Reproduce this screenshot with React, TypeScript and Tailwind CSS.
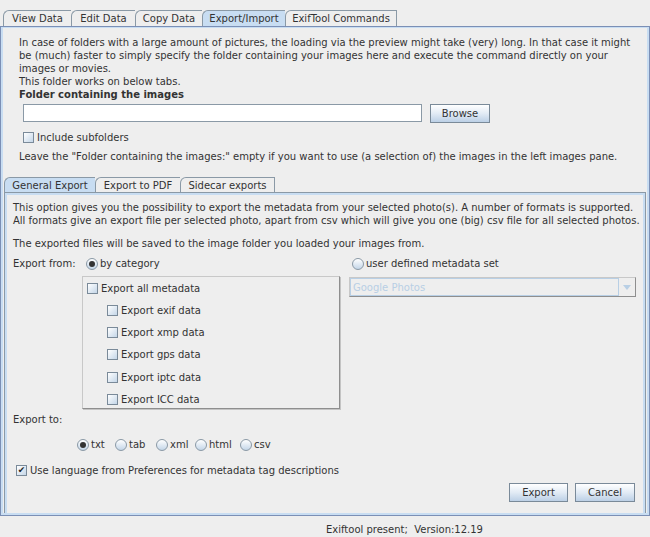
import React from "react";

const Tab: React.FC<{ label: string; w: number; selected?: boolean; last?: boolean }> = ({
  label,
  w,
  selected,
  last,
}) => (
  <div
    style={{ width: w }}
    className={
      "flex h-full items-center justify-center rounded-tl-[6px] border-t border-l border-[#8a99a6] " +
      (last ? "border-r " : "") +
      (selected ? "bg-[#c8ddf2]" : "bg-[#eeeeee]")
    }
  >
    {label}
  </div>
);

const Check: React.FC<{ checked?: boolean }> = ({ checked }) => (
  <span className="relative inline-flex h-[11px] w-[11px] shrink-0 items-center justify-center border border-[#7a8a99] bg-gradient-to-br from-white to-[#c4d6e8]">
    {checked && <span className="text-[9px] leading-none text-[#222]">✔</span>}
  </span>
);

const Radio: React.FC<{ checked?: boolean }> = ({ checked }) => (
  <span className="inline-flex h-[12px] w-[12px] shrink-0 items-center justify-center rounded-full border border-[#8a99a6] bg-gradient-to-b from-white to-[#c4d6e8]">
    {checked && <span className="h-[6px] w-[6px] rounded-full bg-[#333333]" />}
  </span>
);

const Button: React.FC<{ w: number; children: React.ReactNode }> = ({ w, children }) => (
  <div
    style={{ width: w }}
    className="flex h-[19px] items-center justify-center border border-[#7a8a99] bg-gradient-to-b from-white via-[#e2ebf5] to-[#bcd0e6]"
  >
    {children}
  </div>
);

export default function App() {
  const subs = ["Export exif data", "Export xmp data", "Export gps data", "Export iptc data", "Export ICC data"];
  const formats = [
    { label: "txt", w: 24, checked: true },
    { label: "tab", w: 27 },
    { label: "xml", w: 25 },
    { label: "html", w: 31 },
    { label: "csv", w: 24 },
  ];
  return (
    <div className="h-[537px] w-[650px] overflow-hidden whitespace-nowrap bg-[#eeeeee] text-[10px] leading-[13px] text-[#333333] [font-family:'DejaVu_Sans',sans-serif]">
      {/* outer tabs */}
      <div className="flex h-[16px] pl-[3px] mt-[10px]">
        <Tab label="View Data" w={68} />
        <Tab label="Edit Data" w={64} />
        <Tab label="Copy Data" w={67} />
        <Tab label="Export/Import" w={83} selected />
        <Tab label="ExifTool Commands" w={112} last />
      </div>

      {/* outer pane */}
      <div className="h-[490px] border border-[#7b8fb5]">
        <div className="flex h-full flex-col border-x-2 border-b-2 border-t border-[#c8ddf2]">
          <div className="px-[16px] pt-[8px]">
            <div>
              In case of folders with a large amount of pictures, the loading via the preview might take (very) long. In that case it might
            </div>
            <div>be (much) faster to simply specify the folder containing your images here and execute the command directly on your</div>
            <div>images or movies.</div>
            <div>This folder works on below tabs.</div>
            <div className="font-bold">Folder containing the images</div>
            <div className="mt-[3px] flex h-[18px]">
              <div className="ml-[4px] h-full w-[399px] border border-[#8a99a6] bg-white" />
              <div className="ml-[8px]">
                <Button w={60}>Browse</Button>
              </div>
            </div>
            <div className="mt-[9px] flex items-center gap-[3px] pl-[4px]">
              <Check />
              <span>Include subfolders</span>
            </div>
            <div className="mt-[6px]">
              Leave the "Folder containing the images:" empty if you want to use (a selection of) the images in the left images pane.
            </div>
          </div>

          {/* inner tabbed pane */}
          <div className="mt-[14px] ml-[1px] mr-[1px] flex flex-1 flex-col">
            <div className="flex h-[15px]">
              <Tab label="General Export" w={91} selected />
              <Tab label="Export to PDF" w={85} />
              <Tab label="Sidecar exports" w={95} last />
            </div>
            <div className="flex-1 border-x border-t border-[#8a99a6]">
              <div className="flex h-full flex-col border-x-2 border-t-2 border-[#c8ddf2] pl-[6px] pr-[6px] pt-[6px]">
                <div>
                  This option gives you the possibility to export the metadata from your selected photo(s). A number of formats is supported.
                </div>
                <div>All formats give an export file per selected photo, apart from csv which will give you one (big) csv file for all selected photos.</div>
                <div className="mt-[10px]">The exported files will be saved to the image folder you loaded your images from.</div>

                <div className="mt-[7px] flex">
                  <div className="w-[336px]">
                    <div className="flex items-center">
                      <span className="w-[73px]">Export from:</span>
                      <Radio checked />
                      <span className="ml-[2px]">by category</span>
                    </div>
                    <div className="ml-[69px] mt-[6px] h-[133px] w-[258px] border border-t-[#c8c8c8] border-l-[#c8c8c8] border-r-[#8e8e8e] border-b-[#8e8e8e] shadow-[1px_1px_0_#c4c4c4]">
                      <div className="flex h-[22px] items-center gap-[3px] pl-[4px]">
                        <Check />
                        <span>Export all metadata</span>
                      </div>
                      {subs.map((s) => (
                        <div key={s} className="flex h-[22.4px] items-center gap-[3px] pl-[24px]">
                          <Check />
                          <span>{s}</span>
                        </div>
                      ))}
                    </div>
                  </div>
                  <div className="flex-1">
                    <div className="flex items-center pl-[3px]">
                      <Radio />
                      <span className="ml-[2px]">user defined metadata set</span>
                    </div>
                    <div className="mt-[7px] flex h-[20px] w-[287px] border border-t-[#c8c8c8] border-l-[#c8c8c8] border-r-[#8e8e8e] border-b-[#8e8e8e]">
                      <div className="flex flex-1 items-center border border-[#b8cfe5] pl-[2px] text-[#b8cfe5]">Google Photos</div>
                      <div className="flex w-[16px] items-center justify-center">
                        <svg width="8" height="5" viewBox="0 0 8 5">
                          <path d="M0 0 H8 L4 5 Z" fill="#b8cfe5" />
                        </svg>
                      </div>
                    </div>
                  </div>
                </div>

                <div className="mt-[4px]">Export to:</div>
                <div className="ml-[64px] mt-[12px] flex items-center">
                  {formats.map((f) => (
                    <React.Fragment key={f.label}>
                      <Radio checked={f.checked} />
                      <span style={{ width: f.w }} className="ml-[2px]">
                        {f.label}
                      </span>
                    </React.Fragment>
                  ))}
                </div>
                <div className="ml-[3px] mt-[13px] flex items-center gap-[3px]">
                  <Check checked />
                  <span>Use language from Preferences for metadata tag descriptions</span>
                </div>
                <div className="mt-[6px] flex justify-end gap-[7px] pr-[2px]">
                  <Button w={59}>Export</Button>
                  <Button w={60}>Cancel</Button>
                </div>
              </div>
            </div>
          </div>
        </div>
      </div>

      <div className="pl-[326px] pt-[7px]">Exiftool present;&nbsp; Version:12.19</div>
    </div>
  );
}
